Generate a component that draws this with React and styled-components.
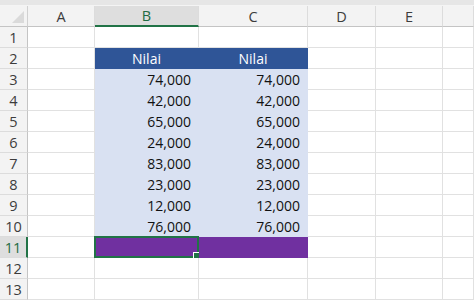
import styled, { createGlobalStyle } from "styled-components";

const GlobalStyle = createGlobalStyle`
    html, body {
        margin: 0;
        padding: 0;
        background: #ffffff;
        overflow: hidden;
    }
    * {
        box-sizing: border-box;
    }
`;

const COLUMNS = ["A", "B", "C", "D", "E", ""];
const VALUES = [
    ["74,000", "74,000"],
    ["42,000", "42,000"],
    ["65,000", "65,000"],
    ["24,000", "24,000"],
    ["83,000", "83,000"],
    ["23,000", "23,000"],
    ["12,000", "12,000"],
    ["76,000", "76,000"],
];

const Window = styled.div`
    width: 474px;
    height: 300px;
    display: flex;
    flex-direction: column;
    font-family: "Open Sans", "Liberation Sans", sans-serif;
`;

const TopStrip = styled.div`
    height: 7px;
    background: #e6e6e6;
    border-bottom: 1px solid #f4f4f4;
`;

const Grid = styled.div`
    display: grid;
    grid-template-columns: 28px 67px 104px 109px 68px 67px 1fr;
    grid-auto-rows: 21px;
`;

const Corner = styled.div`
    position: relative;
    background: #f3f3f3;
    border-right: 1px solid #d0d0d0;
    border-bottom: 1px solid #c4c4c4;

    &::after {
        content: "";
        position: absolute;
        right: 3px;
        bottom: 3px;
        border-left: 12px solid transparent;
        border-bottom: 12px solid #dadada;
    }
`;

const ColHeader = styled.div`
    display: flex;
    align-items: center;
    justify-content: center;
    background: ${(p) => (p.$active ? "#dedede" : "#f3f3f3")};
    color: ${(p) => (p.$active ? "#1f6b43" : "#3c3c3c")};
    font-size: 14.5px;
    border-right: 1px solid #dcdcdc;
    border-bottom: ${(p) =>
        p.$active ? "2px solid #217346" : "1px solid #c4c4c4"};
`;

const RowHeader = styled.div`
    display: flex;
    align-items: center;
    justify-content: center;
    background: ${(p) => (p.$active ? "#dedede" : "#f3f3f3")};
    color: ${(p) => (p.$active ? "#1f6b43" : "#3c3c3c")};
    font-size: 14.5px;
    border-right: ${(p) =>
        p.$active ? "2px solid #217346" : "1px solid #c4c4c4"};
    border-bottom: 1px solid #dcdcdc;
`;

const Cell = styled.div`
    position: relative;
    display: flex;
    align-items: center;
    justify-content: ${(p) => (p.$align === "center" ? "center" : "flex-end")};
    padding: 0 7px;
    font-size: 14px;
    color: ${(p) => p.$color || "#111111"};
    background: ${(p) => p.$bg || "#ffffff"};
    border-right: 1px solid ${(p) => p.$bg || "#e1e1e1"};
    border-bottom: 1px solid ${(p) => p.$bg || "#e1e1e1"};
`;

const Selection = styled.div`
    position: absolute;
    left: -1px;
    top: -1px;
    right: -1px;
    bottom: -1px;
    border: 2px solid #217346;
    pointer-events: none;

    &::after {
        content: "";
        position: absolute;
        right: -4px;
        bottom: -4px;
        width: 6px;
        height: 6px;
        background: #217346;
        border: 1px solid #ffffff;
    }
`;

const HEADER_BLUE = "#2f5597";
const DATA_BLUE = "#d9e1f2";
const PURPLE = "#7030a0";

function renderRow(rowNum) {
    let b = null;
    let c = null;

    if (rowNum === 2) {
        b = { bg: HEADER_BLUE, color: "#ffffff", text: "Nilai", align: "center" };
        c = { bg: HEADER_BLUE, color: "#ffffff", text: "Nilai", align: "center" };
    } else if (rowNum >= 3 && rowNum <= 10) {
        const [vb, vc] = VALUES[rowNum - 3];
        b = { bg: DATA_BLUE, text: vb };
        c = { bg: DATA_BLUE, text: vc };
    } else if (rowNum === 11) {
        b = { bg: PURPLE, text: "" };
        c = { bg: PURPLE, text: "" };
    }

    const active = rowNum === 11;

    return [
        <RowHeader key={`h${rowNum}`} $active={active}>
            {rowNum}
        </RowHeader>,
        <Cell key={`a${rowNum}`} />,
        <Cell
            key={`b${rowNum}`}
            $bg={b?.bg}
            $color={b?.color}
            $align={b?.align}
        >
            {b?.text}
            {active && <Selection />}
        </Cell>,
        <Cell
            key={`c${rowNum}`}
            $bg={c?.bg}
            $color={c?.color}
            $align={c?.align}
        >
            {c?.text}
        </Cell>,
        <Cell key={`d${rowNum}`} />,
        <Cell key={`e${rowNum}`} />,
        <Cell key={`f${rowNum}`} />,
    ];
}

function App() {
    const rows = Array.from({ length: 13 }, (_, i) => i + 1);

    return (
        <>
            <GlobalStyle />
            <Window>
                <TopStrip />
                <Grid>
                    <Corner />
                    {COLUMNS.map((col, i) => (
                        <ColHeader key={i} $active={col === "B"}>
                            {col}
                        </ColHeader>
                    ))}
                    {rows.map((r) => renderRow(r))}
                </Grid>
            </Window>
        </>
    );
}

export default App;
